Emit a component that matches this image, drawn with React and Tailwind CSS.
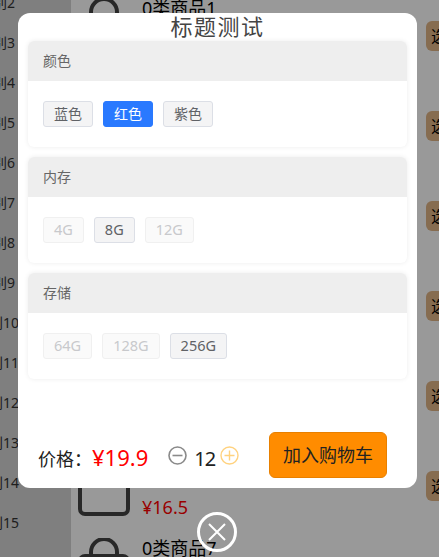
const font = { fontFamily: '"Noto Sans", "Noto Sans CJK SC", sans-serif' };

const cats = ['2', '3', '4', '5', '6', '7', '8', '9', '10', '11', '12', '13', '14', '15'];
const goods = ['0类商品1', '0类商品2', '0类商品3', '0类商品4', '0类商品5', '0类商品6', '0类商品7'];

const groups = [
  { title: '颜色', size: 'text-sm', items: [['蓝色', 'off'], ['红色', 'on'], ['紫色', 'off']] },
  { title: '内存', size: 'text-[14.5px]', items: [['4G', 'dis'], ['8G', 'off'], ['12G', 'dis']] },
  { title: '存储', size: 'text-[14.5px]', items: [['64G', 'dis'], ['128G', 'dis'], ['256G', 'off']] },
];

function Bag() {
  return (
    <svg viewBox="0 0 52 68" className="w-[52px] h-[68px] shrink-0" fill="none" stroke="#444" strokeWidth="4">
      <path d="M13 18v-4a13 13 0 0 1 26 0v4" />
      <rect x="2" y="18" width="48" height="48" rx="5" />
    </svg>
  );
}

function Chip({ label, state, size }) {
  const cls = {
    on: 'bg-[#2979ff] border-[#2979ff] text-white',
    off: 'bg-[#f4f4f5] border-[#dcdfe6] text-[#606266]',
    dis: 'bg-[#fafafa] border-[#f0f0f0] text-[#c8c9cc]',
  }[state];
  return <div className={`h-[26px] px-[10px] flex items-center border rounded-[3px] ${size} ${cls}`}>{label}</div>;
}

export default function App() {
  return (
    <div className="relative h-screen overflow-hidden flex bg-white" style={font}>
      <div className="w-[71px] shrink-0 bg-[#d4d4d4] -mt-[17px] text-[#333] text-sm overflow-hidden">
        {cats.map((c) => (
          <div key={c} className="h-10 flex items-center">
            <div className="w-10 -ml-[23px] shrink-0 flex justify-center whitespace-nowrap">类别{c}</div>
          </div>
        ))}
      </div>
      <div className="flex-1 -mt-[2px]">
        {goods.map((g) => (
          <div key={g} className="h-[90px] flex pl-[7px] relative">
            <Bag />
            <div className="ml-3 text-black text-lg">
              <div className="leading-6 -mt-[2px]">{g}</div>
              <div className="text-[#ff0000] leading-6 mt-[25px]">¥16.5</div>
            </div>
            <div className="absolute right-[-20px] top-[23px] w-[33px] h-[30px] rounded-md bg-[#e0b486] text-base flex items-center pl-[5px] overflow-hidden whitespace-nowrap">选择</div>
          </div>
        ))}
      </div>

      <div className="absolute inset-0 bg-black/40 flex flex-col">
        <div className="mt-[13px] ml-[18px] w-[399px] h-[475px] bg-white rounded-xl px-[10px] flex flex-col">
          <div className="h-7 text-[22px] leading-[26px] tracking-[1.5px] text-center text-[#444] shrink-0">标题测试</div>
          <div className="flex flex-col gap-[10px]">
            {groups.map((g) => (
              <div key={g.title} className="h-[106px] rounded-md overflow-hidden bg-white shadow-[0_0_5px_rgba(0,0,0,0.08)]">
                <div className="h-10 bg-[#eeeeee] flex items-center px-[15px] text-sm text-[#666]">{g.title}</div>
                <div className="flex gap-[10px] px-[15px] pt-5">
                  {g.items.map(([label, state]) => <Chip key={label} label={label} state={state} size={g.size} />)}
                </div>
              </div>
            ))}
          </div>
          <div className="mt-auto mb-[10px] h-[46px] flex items-center pl-[10px] pr-5">
            <span className="text-lg text-[#222] mt-[8px]">价格：</span>
            <span className="text-[22px] text-[#ff0000] mt-[4px]">¥19.9</span>
            <div className="ml-[20px] flex items-center">
              <svg viewBox="0 0 19 19" className="w-[19px] h-[19px]" fill="none" stroke="#8a8a8a" strokeWidth="1.6"><circle cx="9.5" cy="9.5" r="8.5" /><path d="M4.5 9.5h10" /></svg>
              <span className="text-xl tracking-[-1px] text-[#222] ml-[7px] mr-[5px] mt-[8px]">12</span>
              <svg viewBox="0 0 19 19" className="w-[19px] h-[19px]" fill="none" stroke="#ffd27f" strokeWidth="1.4"><circle cx="9.5" cy="9.5" r="8.5" /><path d="M4.5 9.5h10M9.5 4.5v10" /></svg>
            </div>
            <button className="ml-auto w-[118px] h-[46px] rounded-md bg-[#ff8c00] border border-[#e88000] text-lg text-[#222]">加入购物车</button>
          </div>
        </div>
        <div className="mt-[24px] ml-[197px] w-10 h-10 rounded-full border-[3px] border-white flex items-center justify-center">
          <svg viewBox="0 0 20 20" className="w-5 h-5" fill="none" stroke="white" strokeWidth="2"><path d="M2 2l16 16M18 2L2 18" /></svg>
        </div>
      </div>
    </div>
  );
}
